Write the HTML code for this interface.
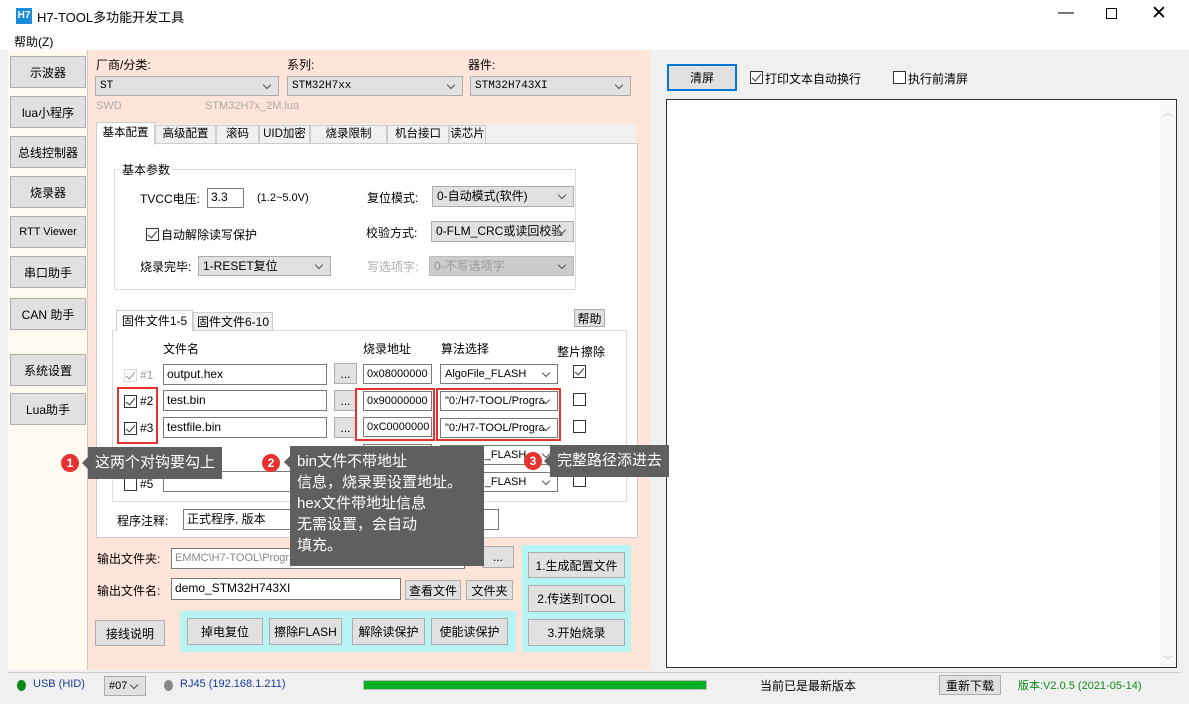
<!DOCTYPE html>
<html><head><meta charset="utf-8"><style>
*{box-sizing:border-box;margin:0;padding:0}
body{width:1189px;height:704px;position:relative;overflow:hidden;background:#f0f0f0;font-family:"Liberation Sans","Noto Sans CJK SC",sans-serif;font-size:12px;color:#000}
.a{position:absolute;white-space:nowrap}
.btn{position:absolute;background:#e1e1e1;border:1px solid #adadad;display:flex;align-items:center;justify-content:center;font-size:12px;white-space:nowrap}
.cb{position:absolute;background:#e1e1e1;border:1px solid #adadad;padding-left:4px;line-height:18px;font-size:11px;overflow:hidden;white-space:nowrap}
.cb::after{content:"";position:absolute;right:8px;top:5px;width:5px;height:5px;border-right:1px solid #555;border-bottom:1px solid #555;transform:rotate(45deg);background:inherit}
.in{position:absolute;background:#fff;border:1px solid #7a7a7a;padding-left:3px;line-height:18px;font-size:12px;overflow:hidden;white-space:nowrap}
.ck{position:absolute;width:13px;height:13px;border:1px solid #333;background:#fff}
.ck.on::after{content:"";position:absolute;left:3px;top:0px;width:4px;height:8px;border-right:1.5px solid #333;border-bottom:1.5px solid #333;transform:rotate(40deg)}
.side{position:absolute;left:10px;width:76px;height:32px;background:#e1e1e1;border:1px solid #adadad;display:flex;align-items:center;justify-content:center;font-size:12px}
.red{position:absolute;border:2px solid #e8322f}
.tip{position:absolute;background:#5f5f5f;color:#fff;font-size:15px;line-height:21px;padding:5px 7px;white-space:nowrap}
.tip::before{content:"";position:absolute;left:-6px;top:10px;border:6px solid transparent;border-left:0;border-right-color:#5f5f5f}
.num{position:absolute;width:18px;height:18px;border-radius:50%;background:#e8322f;color:#fff;font-size:12px;text-align:center;line-height:18px;font-weight:bold}
.cy{position:absolute;background:#b8f4f4}
.tb{position:absolute;top:125px;height:19px;border:1px solid #ccc;text-align:center;line-height:17px;font-size:11.5px;white-space:nowrap}
</style></head><body>
<div class="a" style="left:0;top:0;width:1189px;height:32px;background:#fff"></div>
<div class="a" style="left:16px;top:8px;width:16px;height:16px;background:#1a8cd8;color:#fff;font-size:10px;font-weight:bold;text-align:center;line-height:16px">H7</div>
<div class="a" style="left:37px;top:7px;font-size:13px">H7-TOOL多功能开发工具</div>
<div class="a" style="left:1058px;top:4px;font-size:16px">—</div>
<div class="a" style="left:1106px;top:8px;width:11px;height:11px;border:1px solid #000"></div>
<div class="a" style="left:1151px;top:2px;font-size:19px">✕</div>
<div class="a" style="left:0;top:32px;width:1189px;height:18px;background:#fff"></div>
<div class="a" style="left:14px;top:33px;font-size:12px">帮助(Z)</div>
<div class="a" style="left:8px;top:50px;width:80px;height:620px;background:#fffaf0;border-right:1px solid #ccc"></div>
<div class="side" style="top:56px">示波器</div>
<div class="side" style="top:96px">lua小程序</div>
<div class="side" style="top:136px">总线控制器</div>
<div class="side" style="top:176px">烧录器</div>
<div class="side" style="top:216px;font-size:11px">RTT Viewer</div>
<div class="side" style="top:256px">串口助手</div>
<div class="side" style="top:298px">CAN 助手</div>
<div class="side" style="top:354px">系统设置</div>
<div class="side" style="top:393px">Lua助手</div>
<div class="a" style="left:88px;top:50px;width:562px;height:620px;background:#ffe4da"></div>
<div class="a" style="left:96px;top:56px">厂商/分类:</div>
<div class="a" style="left:287px;top:56px">系列:</div>
<div class="a" style="left:468px;top:56px">器件:</div>
<div class="cb" style="left:95px;top:76px;width:184px;height:20px;font-family:'Liberation Mono',monospace">ST</div>
<div class="cb" style="left:287px;top:76px;width:176px;height:20px;font-family:'Liberation Mono',monospace">STM32H7xx</div>
<div class="cb" style="left:470px;top:76px;width:161px;height:20px;font-family:'Liberation Mono',monospace">STM32H743XI</div>
<div class="a" style="left:96px;top:100px;color:#aaa;font-size:11px">SWD</div>
<div class="a" style="left:205px;top:100px;color:#aaa;font-size:11px">STM32H7x_2M.lua</div>
<div class="a" style="left:96px;top:124px;width:540px;height:20px;background:#f0f0f0"></div>
<div class="tb" style="left:155px;width:61px">高级配置</div>
<div class="tb" style="left:216px;width:43px">滚码</div>
<div class="tb" style="left:259px;width:51px">UID加密</div>
<div class="tb" style="left:310px;width:77px">烧录限制</div>
<div class="tb" style="left:387px;width:62px">机台接口</div>
<div class="tb" style="left:449px;width:37px">读芯片</div>
<div class="a" style="left:96px;top:143px;width:542px;height:395px;background:#fff;border:1px solid #ccc"></div>
<div class="a" style="left:96px;top:122px;width:59px;height:23px;background:#fff;border:1px solid #ccc;border-bottom:none;text-align:center;line-height:21px;font-size:11.5px">基本配置</div>
<div class="a" style="left:114px;top:169px;width:462px;height:121px;border:1px solid #dcdcdc"></div>
<div class="a" style="left:120px;top:161px;background:#fff;padding:0 2px">基本参数</div>
<div class="a" style="left:140px;top:190px">TVCC电压:</div>
<div class="in" style="left:207px;top:188px;width:37px;height:20px;line-height:17px">3.3</div>
<div class="a" style="left:257px;top:192px;font-size:11px">(1.2~5.0V)</div>
<div class="a" style="left:367px;top:189px">复位模式:</div>
<div class="cb" style="left:432px;top:186px;width:142px;height:21px;font-size:12px">0-自动模式(软件)</div>
<div class="ck on" style="left:146px;top:228px"></div>
<div class="a" style="left:161px;top:226px">自动解除读写保护</div>
<div class="a" style="left:366px;top:224px">校验方式:</div>
<div class="cb" style="left:431px;top:221px;width:143px;height:21px;font-size:12px;padding-right:18px">0-FLM_CRC或读回校验</div>
<div class="a" style="left:140px;top:258px">烧录完毕:</div>
<div class="cb" style="left:198px;top:256px;width:133px;height:20px;font-size:12px">1-RESET复位</div>
<div class="a" style="left:367px;top:258px;color:#aaa">写选项字:</div>
<div class="cb" style="left:429px;top:256px;width:145px;height:20px;font-size:12px;color:#999;background:#ccc;border-color:#bbb">0-不写选项字</div>
<div class="a" style="left:112px;top:330px;width:515px;height:172px;border:1px solid #dcdcdc"></div>
<div class="a" style="left:116px;top:310px;width:77px;height:21px;background:#fff;border:1px solid #ccc;border-bottom:none;text-align:center;line-height:20px">固件文件1-5</div>
<div class="a" style="left:193px;top:312px;width:80px;height:19px;background:#f0f0f0;border:1px solid #ccc;text-align:center;line-height:18px">固件文件6-10</div>
<div class="btn" style="left:574px;top:309px;width:31px;height:18px">帮助</div>
<div class="a" style="left:163px;top:340px">文件名</div>
<div class="a" style="left:363px;top:340px">烧录地址</div>
<div class="a" style="left:441px;top:340px">算法选择</div>
<div class="a" style="left:557px;top:343px">整片擦除</div>
<div class="ck on" style="left:124px;top:369px;border-color:#bbb;opacity:.5"></div><div class="a" style="left:140px;top:368px;color:#999">#1</div>
<div class="in" style="left:163px;top:364px;width:164px;height:21px">output.hex</div>
<div class="btn" style="left:334px;top:363px;width:23px;height:21px">...</div>
<div class="in" style="left:363px;top:364px;width:69px;height:20px;font-size:11px">0x08000000</div>
<div class="cb" style="left:440px;top:364px;width:118px;height:20px;background:#fff;border-color:#7a7a7a">AlgoFile_FLASH</div>
<div class="ck on" style="left:573px;top:365px"></div>
<div class="ck on" style="left:124px;top:395px"></div><div class="a" style="left:140px;top:394px">#2</div>
<div class="in" style="left:163px;top:390px;width:164px;height:21px">test.bin</div>
<div class="btn" style="left:334px;top:390px;width:23px;height:21px">...</div>
<div class="in" style="left:363px;top:391px;width:69px;height:20px;font-size:11px">0x90000000</div>
<div class="cb" style="left:440px;top:391px;width:118px;height:20px;background:#fff;border-color:#7a7a7a;padding-right:18px">"0:/H7-TOOL/Progra</div>
<div class="ck" style="left:573px;top:393px"></div>
<div class="ck on" style="left:124px;top:422px"></div><div class="a" style="left:140px;top:421px">#3</div>
<div class="in" style="left:163px;top:417px;width:164px;height:21px">testfile.bin</div>
<div class="btn" style="left:334px;top:417px;width:23px;height:21px">...</div>
<div class="in" style="left:363px;top:417px;width:69px;height:20px;font-size:11px">0xC0000000</div>
<div class="cb" style="left:440px;top:418px;width:118px;height:20px;background:#fff;border-color:#7a7a7a;padding-right:18px">"0:/H7-TOOL/Progra</div>
<div class="ck" style="left:573px;top:420px"></div>
<div class="in" style="left:363px;top:444px;width:69px;height:20px;font-size:11px">0x08000000</div>
<div class="cb" style="left:440px;top:445px;width:118px;height:20px;background:#fff;border-color:#7a7a7a">AlgoFile_FLASH</div>
<div class="ck" style="left:573px;top:447px"></div>
<div class="ck" style="left:124px;top:478px"></div><div class="a" style="left:140px;top:477px">#5</div>
<div class="in" style="left:163px;top:471px;width:164px;height:21px"></div>
<div class="cb" style="left:440px;top:472px;width:118px;height:20px;background:#fff;border-color:#7a7a7a">AlgoFile_FLASH</div>
<div class="ck" style="left:573px;top:474px"></div>
<div class="a" style="left:117px;top:512px">程序注释:</div>
<div class="in" style="left:183px;top:509px;width:316px;height:21px">正式程序, 版本</div>
<div class="red" style="left:117px;top:387px;width:41px;height:57px"></div>
<div class="red" style="left:355px;top:388px;width:80px;height:53px"></div>
<div class="red" style="left:436px;top:388px;width:125px;height:53px"></div>
<div class="a" style="left:97px;top:550px">输出文件夹:</div>
<div class="in" style="left:171px;top:548px;width:294px;height:21px;color:#888;font-size:11px">EMMC\H7-TOOL\Programmer\User\Demo</div>
<div class="btn" style="left:482px;top:546px;width:32px;height:22px">...</div>
<div class="a" style="left:97px;top:582px">输出文件名:</div>
<div class="in" style="left:171px;top:578px;width:230px;height:22px">demo_STM32H743XI</div>
<div class="btn" style="left:405px;top:580px;width:56px;height:20px">查看文件</div>
<div class="btn" style="left:466px;top:580px;width:47px;height:20px">文件夹</div>
<div class="cy" style="left:522px;top:545px;width:109px;height:107px"></div>
<div class="btn" style="left:528px;top:552px;width:97px;height:26px">1.生成配置文件</div>
<div class="btn" style="left:528px;top:585px;width:97px;height:27px">2.传送到TOOL</div>
<div class="btn" style="left:528px;top:619px;width:97px;height:27px">3.开始烧录</div>
<div class="cy" style="left:180px;top:611px;width:336px;height:41px"></div>
<div class="btn" style="left:187px;top:618px;width:76px;height:27px">掉电复位</div>
<div class="btn" style="left:269px;top:618px;width:73px;height:27px">擦除FLASH</div>
<div class="btn" style="left:352px;top:618px;width:73px;height:27px">解除读保护</div>
<div class="btn" style="left:431px;top:618px;width:77px;height:27px">使能读保护</div>
<div class="btn" style="left:95px;top:620px;width:70px;height:26px">接线说明</div>
<div class="a" style="left:650px;top:50px;width:5px;height:620px;background:#f0f0f0"></div>
<div class="btn" style="left:667px;top:64px;width:70px;height:27px;border:2px solid #0078d7">清屏</div>
<div class="ck on" style="left:750px;top:71px"></div>
<div class="a" style="left:765px;top:70px">打印文本自动换行</div>
<div class="ck" style="left:893px;top:71px"></div>
<div class="a" style="left:908px;top:70px">执行前清屏</div>
<div class="a" style="left:666px;top:99px;width:511px;height:569px;background:#fff;border:1px solid #333"></div>
<div class="a" style="left:1160px;top:100px;width:16px;height:567px;background:#f8f8f8"></div>
<div class="a" style="left:1163px;top:104px;color:#bbb;font-size:10px">︿</div>
<div class="a" style="left:1163px;top:652px;color:#bbb;font-size:10px">﹀</div>
<div class="a" style="left:8px;top:672px;width:1173px;height:26px;background:#f0f0f0;border-top:1px solid #ccc"></div>
<div class="a" style="left:17px;top:680px;width:9px;height:11px;border-radius:50%;background:#0a8a1a"></div>
<div class="a" style="left:33px;top:678px;font-size:11px;color:#1a3a9a">USB (HID)</div>
<div class="cb" style="left:104px;top:676px;width:42px;height:20px">#07</div>
<div class="a" style="left:164px;top:680px;width:9px;height:11px;border-radius:50%;background:#888"></div>
<div class="a" style="left:180px;top:678px;font-size:11px;color:#1a3a9a">RJ45 (192.168.1.211)</div>
<div class="a" style="left:363px;top:680px;width:344px;height:10px;background:#06b025;border:1px solid #bbb"></div>
<div class="a" style="left:760px;top:677px">当前已是最新版本</div>
<div class="btn" style="left:939px;top:675px;width:62px;height:20px">重新下载</div>
<div class="a" style="left:1018px;top:677px;font-size:11px;color:#0a8a1a">版本:V2.0.5 (2021-05-14)</div>
<div class="num" style="left:61px;top:454px">1</div>
<div class="tip" style="left:88px;top:447px;height:32px">这两个对钩要勾上</div>
<div class="num" style="left:262px;top:454px">2</div>
<div class="tip" style="left:290px;top:446px;width:194px;height:120px">bin文件不带地址<br>信息，烧录要设置地址。<br>hex文件带地址信息<br>无需设置，会自动<br>填充。</div>
<div class="num" style="left:524px;top:452px">3</div>
<div class="tip" style="left:550px;top:445px;height:32px">完整路径添进去</div>
</body></html>
